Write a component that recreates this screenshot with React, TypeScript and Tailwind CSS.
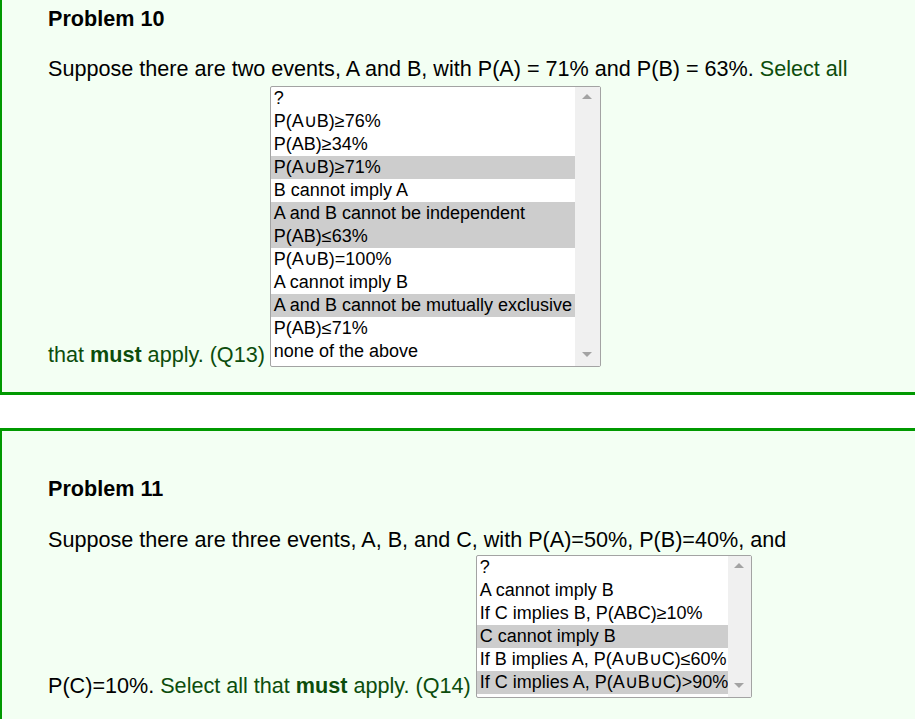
import React from "react";

type Opt = { label: string; on?: boolean };

const q13: Opt[] = [
  { label: "?" },
  { label: "P(A∪B)≥76%" },
  { label: "P(AB)≥34%" },
  { label: "P(A∪B)≥71%", on: true },
  { label: "B cannot imply A" },
  { label: "A and B cannot be independent", on: true },
  { label: "P(AB)≤63%", on: true },
  { label: "P(A∪B)=100%" },
  { label: "A cannot imply B" },
  { label: "A and B cannot be mutually exclusive", on: true },
  { label: "P(AB)≤71%" },
  { label: "none of the above" },
];

const q14: Opt[] = [
  { label: "?" },
  { label: "A cannot imply B" },
  { label: "If C implies B, P(ABC)≥10%" },
  { label: "C cannot imply B", on: true },
  { label: "If B implies A, P(A∪B∪C)≤60%" },
  { label: "If C implies A, P(A∪B∪C)>90%", on: true },
];

function MultiSelect({ options, width }: { options: Opt[]; width: string }) {
  return (
    <div
      className={`${width} flex shrink-0 border border-[#a3a3a3] rounded-[2px] bg-white`}
    >
      <div className="flex-1 flex flex-col pb-[3px]">
        {options.map((o) => (
          <div
            key={o.label}
            className={`h-[23px] leading-[23px] pl-[3px] text-[18px] text-black whitespace-nowrap ${
              o.on ? "bg-[#cdcdcd]" : ""
            }`}
          >
            {o.label}
          </div>
        ))}
      </div>
      <div className="w-[25px] bg-[#f0f0f0] flex flex-col justify-between items-center pt-[7px] pb-[9px]">
        <div className="w-0 h-0 border-l-[5px] border-r-[5px] border-b-[5px] border-l-transparent border-r-transparent border-b-[#a3a3a3]" />
        <div className="w-0 h-0 border-l-[5px] border-r-[5px] border-t-[5px] border-l-transparent border-r-transparent border-t-[#a3a3a3]" />
      </div>
    </div>
  );
}

export default function App() {
  return (
    <div
      className="w-[915px] h-[719px] overflow-hidden bg-white text-[21.6px] text-black"
      style={{ fontFamily: '"Liberation Sans", Arial, sans-serif' }}
    >
      {/* Problem 10 */}
      <div className="bg-[#f3fff3] border-l-2 border-b-[3px] border-[#009900] pl-[46px] pt-[7px] pb-[25px]">
        <h2 className="font-bold leading-[24px]">Problem 10</h2>
        <p className="mt-[26px] leading-[24px] whitespace-nowrap">
          Suppose there are two events, A and B, with P(A) = 71% and P(B) = 63%.{" "}
          <span className="text-[#0c4d0c]">Select all</span>
        </p>
        <div className="flex items-end mt-[5px]">
          <span className="leading-[24px] text-[#0c4d0c] whitespace-nowrap">
            that <b>must</b> apply. (Q13)
          </span>
          <div className="ml-[5px]">
            <MultiSelect options={q13} width="w-[331px]" />
          </div>
        </div>
      </div>

      <div className="h-[33px]" />

      {/* Problem 11 */}
      <div className="bg-[#f3fff3] border-l-2 border-t-[3px] border-[#009900] pl-[46px] pt-[46px] pb-[30px]">
        <h2 className="font-bold leading-[24px]">Problem 11</h2>
        <p className="mt-[27px] leading-[24px] whitespace-nowrap">
          Suppose there are three events, A, B, and C, with P(A)=50%, P(B)=40%, and
        </p>
        <div className="flex items-end mt-[3px]">
          <span className="leading-[24px] whitespace-nowrap">
            P(C)=10%.{" "}
            <span className="text-[#0c4d0c]">
              Select all that <b>must</b> apply. (Q14)
            </span>
          </span>
          <div className="ml-[5px]">
            <MultiSelect options={q14} width="w-[276px]" />
          </div>
        </div>
      </div>
    </div>
  );
}
